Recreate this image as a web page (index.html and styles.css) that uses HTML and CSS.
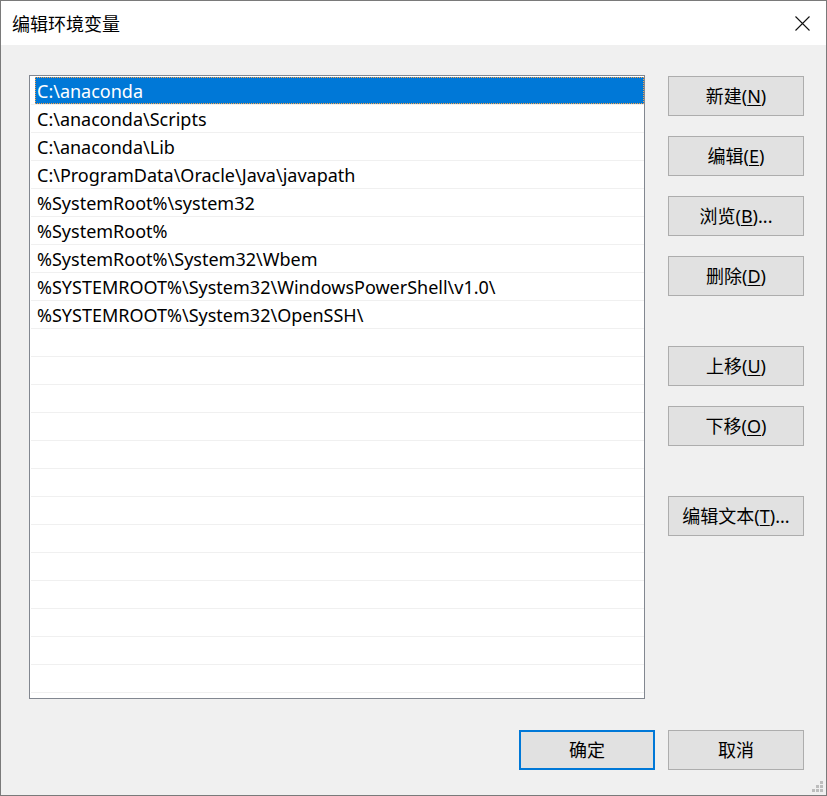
FILE: index.html
```html
<!DOCTYPE html>
<html lang="zh-CN">
<head>
<meta charset="utf-8">
<title>编辑环境变量</title>
<link rel="stylesheet" href="styles.css">
</head>
<body>
<div class="window">
  <div class="titlebar">
    <span class="title">编辑环境变量</span>
    <svg class="close" width="15" height="15" viewBox="0 0 15 15" aria-label="关闭">
      <path d="M0.5 0.5 L14.5 14.5 M14.5 0.5 L0.5 14.5" stroke="#111" stroke-width="1.1" fill="none"/>
    </svg>
  </div>
  <div class="body">
    <div class="main">
      <div class="list">
        <div class="row sel"><div class="cell">C:\anaconda</div></div>
        <div class="row"><div class="cell">C:\anaconda\Scripts</div></div>
        <div class="row"><div class="cell">C:\anaconda\Lib</div></div>
        <div class="row"><div class="cell">C:\ProgramData\Oracle\Java\javapath</div></div>
        <div class="row"><div class="cell">%SystemRoot%\system32</div></div>
        <div class="row"><div class="cell">%SystemRoot%</div></div>
        <div class="row"><div class="cell">%SystemRoot%\System32\Wbem</div></div>
        <div class="row"><div class="cell">%SYSTEMROOT%\System32\WindowsPowerShell\v1.0\</div></div>
        <div class="row"><div class="cell">%SYSTEMROOT%\System32\OpenSSH\</div></div>
        <div class="row"><div class="cell"></div></div>
        <div class="row"><div class="cell"></div></div>
        <div class="row"><div class="cell"></div></div>
        <div class="row"><div class="cell"></div></div>
        <div class="row"><div class="cell"></div></div>
        <div class="row"><div class="cell"></div></div>
        <div class="row"><div class="cell"></div></div>
        <div class="row"><div class="cell"></div></div>
        <div class="row"><div class="cell"></div></div>
        <div class="row"><div class="cell"></div></div>
        <div class="row"><div class="cell"></div></div>
        <div class="row"><div class="cell"></div></div>
        <div class="row"><div class="cell"></div></div>
        <div class="row"><div class="cell"></div></div>
      </div>
      <div class="side">
        <button class="btn">新建(<u>N</u>)</button>
        <button class="btn">编辑(<u>E</u>)</button>
        <button class="btn">浏览(<u>B</u>)...</button>
        <button class="btn">删除(<u>D</u>)</button>
        <button class="btn group">上移(<u>U</u>)</button>
        <button class="btn">下移(<u>O</u>)</button>
        <button class="btn group">编辑文本(<u>T</u>)...</button>
      </div>
    </div>
    <div class="footer">
      <button class="btn default">确定</button>
      <button class="btn">取消</button>
    </div>
    <svg class="grip" width="12" height="12" viewBox="0 0 12 12">
      <rect x="8" y="0" width="3" height="3" fill="#bdbdbd"/>
      <rect x="4" y="4" width="3" height="3" fill="#bdbdbd"/>
      <rect x="8" y="4" width="3" height="3" fill="#bdbdbd"/>
      <rect x="0" y="8" width="3" height="3" fill="#bdbdbd"/>
      <rect x="4" y="8" width="3" height="3" fill="#bdbdbd"/>
      <rect x="8" y="8" width="3" height="3" fill="#bdbdbd"/>
    </svg>
  </div>
</div>
</body>
</html>
```
FILE: styles.css
```css
* { box-sizing: border-box; }
html, body { margin: 0; padding: 0; }
body {
  font-family: "Noto Sans", "Noto Sans CJK SC", sans-serif;
  font-size: 18px;
  color: #000;
  background: #fff;
}
.window {
  width: 827px;
  height: 796px;
  border: 1px solid #7a7a7a;
  display: flex;
  flex-direction: column;
  background: #f0f0f0;
}
.titlebar {
  height: 44px;
  background: #fff;
  display: flex;
  align-items: center;
  justify-content: space-between;
  padding: 0 16px 0 11px;
  flex: none;
}
.title {
  font-family: "Noto Sans CJK SC", sans-serif;
  font-size: 18px;
  line-height: 1;
  margin-top: -1px;
}
.close { display: block; margin-top: 1px; }
.body {
  position: relative;
  flex: 1;
  padding: 30px 22px 0 28px;
}
.main {
  display: flex;
  gap: 23px;
}
.list {
  width: 616px;
  height: 624px;
  border: 1px solid #828790;
  background: #fff;
  padding: 1px 0 0 1px;
  overflow: hidden;
}
.row {
  height: 28px;
  border-bottom: 1px solid #f0f0f0;
  padding-left: 4px;
}
.cell {
  height: 27px;
  line-height: 28px;
  padding-left: 2px;
  white-space: nowrap;
}
.row.sel .cell {
  background: #0078d7;
  color: #fff;
  outline: 1px dotted #f7a148;
  outline-offset: -1px;
}
.side {
  display: flex;
  flex-direction: column;
  gap: 20px;
  margin-top: 1px;
}
.btn {
  width: 136px;
  height: 40px;
  background: #e1e1e1;
  border: 1px solid #adadad;
  border-radius: 0;
  font-family: "Noto Sans", "Noto Sans CJK SC", sans-serif;
  font-size: 18px;
  color: #000;
  padding: 0;
  line-height: 1;
  flex: none;
}
.btn u { text-underline-offset: 2px; }
.side .group { margin-top: 30px; }
.footer {
  display: flex;
  justify-content: flex-end;
  gap: 13px;
  margin-top: 31px;
}
.btn.default {
  border: 2px solid #0078d7;
}
.grip {
  position: absolute;
  right: 2px;
  bottom: 2px;
}
```
